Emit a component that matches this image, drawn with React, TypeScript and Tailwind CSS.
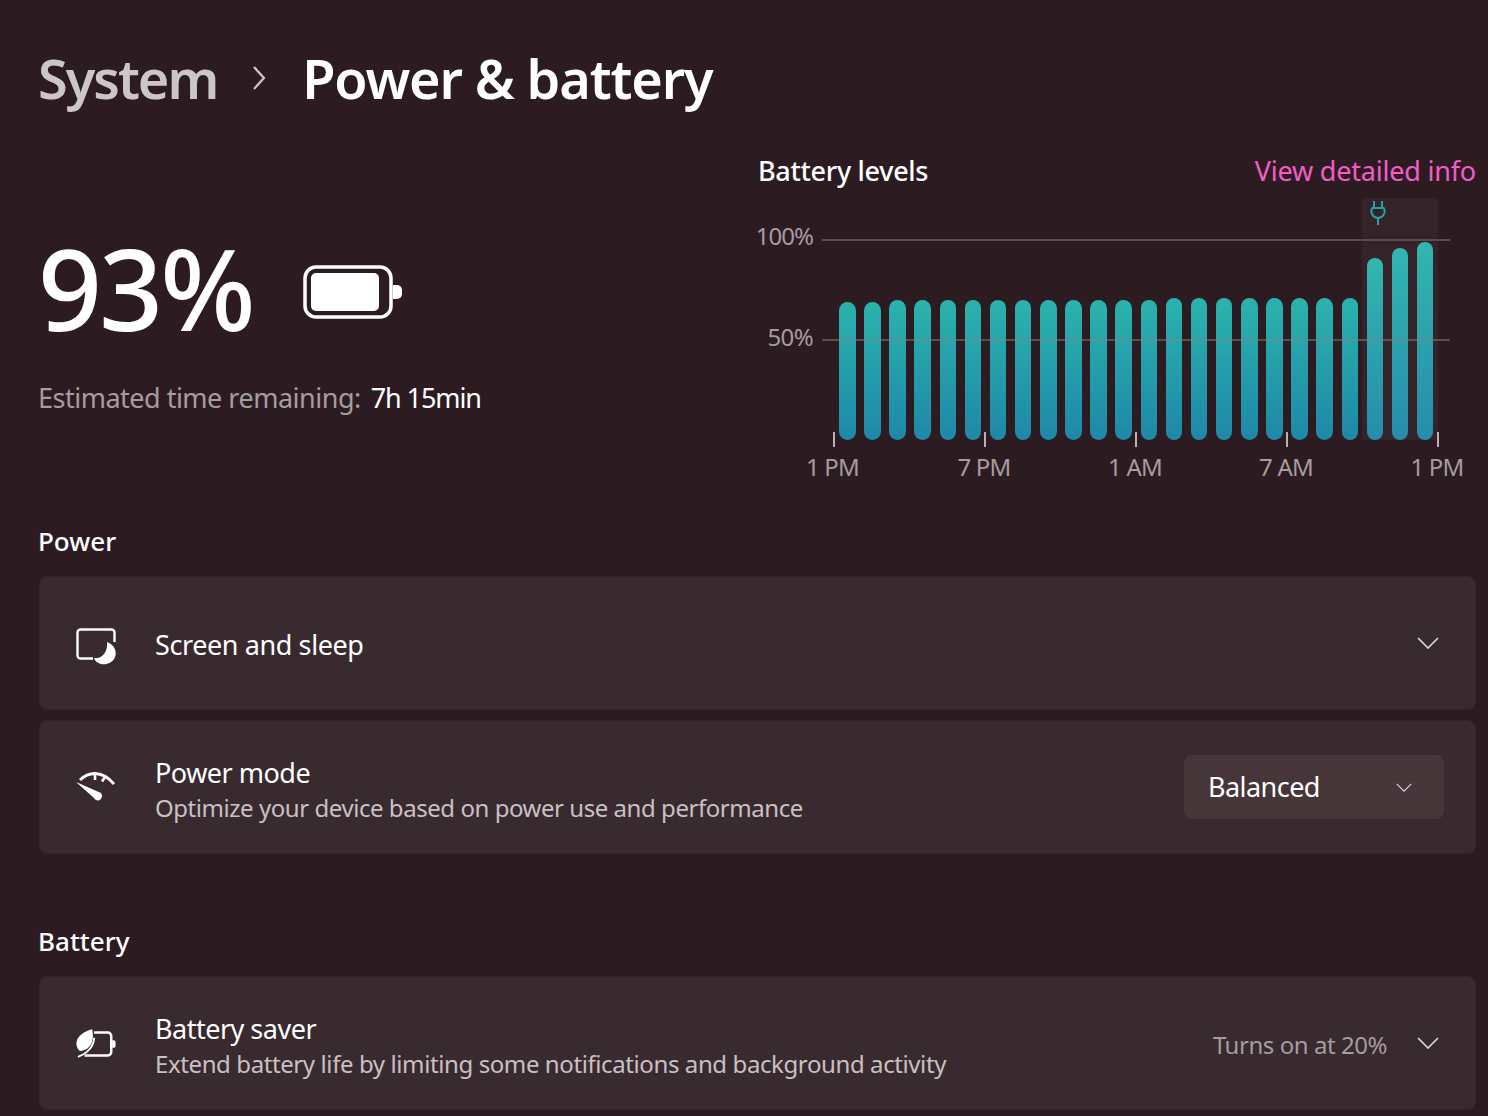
import React from 'react';

const barTops = [302, 302, 300, 300, 300, 300, 300, 300, 300, 300, 300, 300, 300, 298, 298, 298, 298, 298, 298, 298, 298, 258, 248, 242];
const ticks = [
  { x: 75.5, label: '1 PM' },
  { x: 227, label: '7 PM' },
  { x: 378, label: '1 AM' },
  { x: 529, label: '7 AM' },
  { x: 680, label: '1 PM' },
];

function Chevron({ className }: { className: string }) {
  return (
    <svg viewBox="0 0 22 12" fill="none" stroke="currentColor" strokeWidth="1.7" className={className}>
      <path d="M1 1l10 10L21 1" />
    </svg>
  );
}

function BatteryIcon() {
  return (
    <svg width="100" height="54" viewBox="0 0 100 54" fill="none">
      <rect x="2" y="2" width="86" height="50" rx="11" stroke="#fff" strokeWidth="3.5" />
      <rect x="8" y="8" width="68" height="38" rx="5" fill="#fff" />
      <path d="M90 20h4a5 5 0 0 1 5 5v4a5 5 0 0 1-5 5h-4z" fill="#fff" />
    </svg>
  );
}

function PlugIcon() {
  return (
    <svg width="18" height="26" viewBox="0 0 18 26" fill="none" stroke="#2a9fa8" strokeWidth="2">
      <path d="M5 1v7M13 1v7M2.500 8h13M9 18v7" />
      <path d="M3 8.500c-2 4 1 9.500 6 9.500s8-5.500 6-9.500" />
    </svg>
  );
}

function ScreenSleepIcon() {
  return (
    <svg width="40" height="37" viewBox="0 0 40 37" fill="none">
      <path d="M17 30.500H4.500A3 3 0 0 1 1.500 27.500V4.500A3 3 0 0 1 4.500 1.500h31a3 3 0 0 1 3 3V14" stroke="#fff" strokeWidth="2.400" />
      <path d="M31 14C39 17 41 24 39 29 37 35 30 37 25 36 21 35 19 33 18 30 26 31 32 24 31 14z" fill="#fff" />
    </svg>
  );
}

function GaugeIcon() {
  return (
    <svg width="42" height="32" viewBox="2 0 42 32" fill="none">
      <path d="M6 9C11 4 16 2.500 21 2.500S33 5 40 13" stroke="#fff" strokeWidth="2.800" />
      <path d="M21 2v7M31 6l-3 4.500" stroke="#fff" strokeWidth="2.600" />
      <path d="M2 11L27 22C29.500 25 27 29.500 24 29.500 22 29.500 21 28.500 20 27z" fill="#fff" />
    </svg>
  );
}

function LeafBatteryIcon() {
  return (
    <svg width="40" height="31" viewBox="0 0 42 32" fill="none">
      <path d="M19 4.500h14.500A3.500 3.500 0 0 1 37 8v17a3.500 3.500 0 0 1-3.500 3.500H9" stroke="#fff" strokeWidth="2.600" />
      <path d="M38 12.500h1.500a2 2 0 0 1 2 2v4a2 2 0 0 1-2 2H38z" fill="#fff" />
      <path d="M17 1C9 3 1 8 .5 15 0 19 2 22 4 24 10 24 15 20 17 14 18 10 18 5 17 1z" fill="#fff" />
      <path d="M19 10C19 18 13 26 2 30" stroke="#fff" strokeWidth="2" />
    </svg>
  );
}

function Card({ children }: { children: React.ReactNode }) {
  return (
    <div className="ml-px flex h-[134px] items-center rounded-lg border border-[#33242a] bg-[#392a2f] pl-[36px]">
      {children}
    </div>
  );
}

export default function App() {
  return (
    <div className="h-[1116px] overflow-hidden bg-[#2c1c22] pl-[38px] pr-[12px] pt-[38px] font-['Noto_Sans',sans-serif] text-white">
      <div className="flex h-[80px] items-center text-[54px] font-semibold leading-none">
        <span className="tracking-[-2px] text-[#cdc6c9]">System</span>
        <svg width="14" height="26" viewBox="0 0 14 26" fill="none" stroke="#cdc6c9" strokeWidth="2.200" className="ml-[35px] mr-[36px]">
          <path d="M2 2l10 11L2 24" />
        </svg>
        <span className="tracking-[-1.150px]">Power &amp; battery</span>
      </div>

      <div className="flex h-[398px] pt-[32px]">
        <div className="w-[720px]">
          <div className="flex h-[200px] items-center pt-[76px]">
            <span className="text-[112px] font-medium leading-none tracking-[-3px]">93%</span>
            <span className="ml-[50px] mt-[8px]"><BatteryIcon /></span>
          </div>
          <div className="mt-[30px] flex text-[27px] leading-[36px] tracking-[-0.5px]">
            <span className="text-[#a69c9f]">Estimated time remaining:</span>
            <span className="ml-[10px] tracking-[-1.100px]">7h 15min</span>
          </div>
        </div>

        <div className="flex-1">
          <div className="flex h-[42px] items-center justify-between text-[27px]">
            <span className="font-medium tracking-[-0.3px]">Battery levels</span>
            <span className="text-[#f25cc5] tracking-[-0.2px]">View detailed info</span>
          </div>
          <div className="relative mt-[6px] h-[290px]">
            <div className="flex h-[242px] items-end gap-[8.630px] pl-[81px]">
              {barTops.map((top, i) => (
                <div
                  key={i}
                  className="w-[16.500px] rounded-full bg-gradient-to-b from-[#2bb3ac] to-[#1f88a8]"
                  style={{ height: 440 - top }}
                />
              ))}
            </div>
            <div className="absolute left-[604px] top-0 h-[242px] w-[76px] bg-white/[0.04]" />
            <div className="absolute left-[611px] top-[2px]"><PlugIcon /></div>
            <div className="absolute left-[64px] top-[41px] h-[2px] w-[628px] bg-[#5c4d51]" />
            <div className="absolute left-[64px] top-[141px] h-[2px] w-[628px] bg-[#8a7f82]/50" />
            <span className="absolute right-[663px] top-[22px] text-[24px] leading-[32px] tracking-[-1px] text-[#a69c9f]">100%</span>
            <span className="absolute right-[663px] top-[123px] text-[24px] leading-[32px] tracking-[-0.6px] text-[#a69c9f]">50%</span>
            {ticks.map((t, i) => (
              <React.Fragment key={i}>
                <div className="absolute top-[234px] h-[15px] w-[2px] bg-[#b9b1b3]" style={{ left: t.x - 1 }} />
                <span
                  className="absolute top-[253px] w-[80px] text-center text-[24px] leading-[32px] tracking-[-0.8px] text-[#a69c9f]"
                  style={{ left: t.x - 41 }}
                >
                  {t.label}
                </span>
              </React.Fragment>
            ))}
          </div>
        </div>
      </div>

      <div className="flex h-[50px] items-center text-[26px] font-medium">Power</div>
      <div className="mt-[10px] flex flex-col gap-[10px]">
        <Card>
          <span className="mt-[6px] flex w-[42px]"><ScreenSleepIcon /></span>
          <span className="ml-[37px] flex-1 pt-[4px] text-[27px] tracking-[-0.4px]">Screen and sleep</span>
          <Chevron className="mr-[36px] h-[12px] w-[22px] text-[#d9d3d5]" />
        </Card>
        <Card>
          <span className="flex w-[42px]"><GaugeIcon /></span>
          <div className="ml-[37px] flex-1 pt-[6px]">
            <div className="text-[27px] leading-[36px] tracking-[-0.5px]">Power mode</div>
            <div className="text-[24px] leading-[34px] tracking-[-0.45px] text-[#c9c0c3]">Optimize your device based on power use and performance</div>
          </div>
          <div className="mr-[31px] flex h-[64px] w-[260px] items-center justify-between rounded-lg bg-[#463639] pl-[24px] pr-[32px] text-[27px] tracking-[-0.55px]">
            <span>Balanced</span>
            <Chevron className="h-[9px] w-[16px] text-[#d9d3d5]" />
          </div>
        </Card>
      </div>

      <div className="mt-[62px] flex h-[50px] items-center text-[26px] font-medium">Battery</div>
      <div className="mt-[10px]">
        <Card>
          <span className="flex w-[42px]"><LeafBatteryIcon /></span>
          <div className="ml-[37px] flex-1 pt-[6px]">
            <div className="text-[27px] leading-[36px] tracking-[-0.5px]">Battery saver</div>
            <div className="text-[24px] leading-[34px] tracking-[-0.4px] text-[#c9c0c3]">Extend battery life by limiting some notifications and background activity</div>
          </div>
          <span className="mr-[30px] pt-[4px] text-[24px] tracking-[-0.45px] text-[#a69c9f]">Turns on at 20%</span>
          <Chevron className="mr-[36px] h-[12px] w-[22px] text-[#d9d3d5]" />
        </Card>
      </div>
    </div>
  );
}
